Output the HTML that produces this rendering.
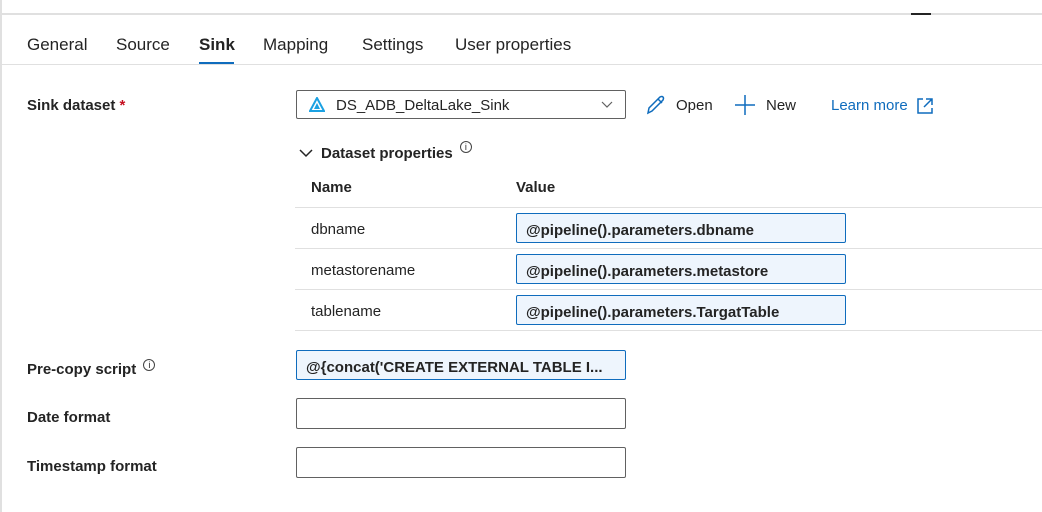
<!DOCTYPE html>
<html><head><meta charset="utf-8"><style>
*{margin:0;padding:0;box-sizing:border-box}
body{width:1042px;height:512px;background:#fff;font-family:"Liberation Sans",sans-serif;color:#242424;position:relative;overflow:hidden}
.a{position:absolute;white-space:nowrap}
.tab{font-size:17px;top:35px}
.lbl{font-size:15px;font-weight:bold;left:27px}
.inp{position:absolute;border:1px solid #616161;border-radius:2px;background:#fff;height:30px}
.val{position:absolute;border:1px solid #0f6cbd;border-radius:2px;background:#eef5fd;height:30px;font-size:15px;font-weight:bold;padding:8px 0 0 9px;white-space:nowrap}
.hl{position:absolute;left:295px;right:0;height:1px;background:#e0e0e0}
.cell{font-size:15px;left:311px}
.info{display:inline-block;width:12px;height:12px;border:1px solid #444;border-radius:50%;font-size:9px;text-align:center;line-height:10px;vertical-align:top;font-weight:normal}
</style></head><body>
<div class="a" style="left:0;top:0;width:2px;height:512px;background:#e0e0e0"></div>
<div class="a" style="left:0;top:13px;width:1042px;height:2px;background:#e0e0e0"></div>
<div class="a" style="left:911px;top:13px;width:20px;height:2px;background:#242424"></div>
<div class="a tab" style="left:27px">General</div>
<div class="a tab" style="left:116px">Source</div>
<div class="a tab" style="left:199px;font-weight:bold">Sink</div>
<div class="a tab" style="left:263px">Mapping</div>
<div class="a tab" style="left:362px">Settings</div>
<div class="a tab" style="left:455px">User properties</div>
<div class="a" style="left:199px;top:62px;width:35px;height:3px;background:#0f6cbd"></div>
<div class="a" style="left:0;top:64px;width:1042px;height:1px;background:#e0e0e0"></div>

<div class="a lbl" style="top:97px">Sink dataset <span style="color:#c50f1f">*</span></div>
<div class="inp" style="left:296px;top:90px;width:330px;height:29px"></div>
<svg class="a" style="left:309px;top:97px" width="16" height="16" viewBox="0 0 16 16"><path d="M8 1L1 14h14z" fill="none" stroke="#1ba1e2" stroke-width="2"/><path d="M8 6L5 12h6z" fill="#1ba1e2"/></svg>
<div class="a" style="left:336px;top:97px;font-size:15px">DS_ADB_DeltaLake_Sink</div>
<svg class="a" style="left:601px;top:101px" width="12" height="8" viewBox="0 0 12 8"><path d="M1 1l5 5 5-5" fill="none" stroke="#616161" stroke-width="1.2"/></svg>
<svg class="a" style="left:645px;top:94px" width="22" height="22" viewBox="0 0 22 22"><path d="M3 19l1-5L15 3q2-1 3 0t0 3L7 17z M13 5l4 4" fill="none" stroke="#0f6cbd" stroke-width="1.5"/></svg>
<div class="a" style="left:676px;top:97px;font-size:15px">Open</div>
<svg class="a" style="left:735px;top:95px" width="20" height="20" viewBox="0 0 20 20"><path d="M10 0v20M0 10h20" stroke="#0f6cbd" stroke-width="1.5"/></svg>
<div class="a" style="left:766px;top:97px;font-size:15px">New</div>
<div class="a" style="left:831px;top:97px;font-size:15px;color:#0f6cbd">Learn more</div>
<svg class="a" style="left:917px;top:98px" width="16" height="16" viewBox="0 0 16 16"><path d="M6 1H1v14h14v-5M9 1h6v6M15 1L7 9" fill="none" stroke="#0f6cbd" stroke-width="1.5"/></svg>

<svg class="a" style="left:299px;top:148px" width="14" height="10" viewBox="0 0 14 10"><path d="M1 2l6 6 6-6" fill="none" stroke="#242424" stroke-width="1.5"/></svg>
<div class="a" style="left:321px;top:145px;font-size:15px;font-weight:bold">Dataset properties <span class="info" style="margin-top:-4px;margin-left:3px">i</span></div>
<div class="a" style="left:311px;top:179px;font-size:15px;font-weight:bold">Name</div>
<div class="a" style="left:516px;top:179px;font-size:15px;font-weight:bold">Value</div>
<div class="hl" style="top:207px"></div>
<div class="hl" style="top:248px"></div>
<div class="hl" style="top:289px"></div>
<div class="hl" style="top:330px"></div>
<div class="a cell" style="top:221px">dbname</div>
<div class="a cell" style="top:262px">metastorename</div>
<div class="a cell" style="top:303px">tablename</div>
<div class="val" style="left:516px;top:213px;width:330px">@pipeline().parameters.dbname</div>
<div class="val" style="left:516px;top:254px;width:330px">@pipeline().parameters.metastore</div>
<div class="val" style="left:516px;top:295px;width:330px">@pipeline().parameters.TargatTable</div>

<div class="a lbl" style="top:361px">Pre-copy script <span class="info" style="margin-top:-2px;margin-left:3px">i</span></div>
<div class="val" style="left:296px;top:350px;width:330px">@{concat('CREATE EXTERNAL TABLE I...</div>
<div class="a lbl" style="top:409px">Date format</div>
<div class="inp" style="left:296px;top:398px;width:330px;height:31px"></div>
<div class="a lbl" style="top:458px">Timestamp format</div>
<div class="inp" style="left:296px;top:447px;width:330px;height:31px"></div>
</body></html>
